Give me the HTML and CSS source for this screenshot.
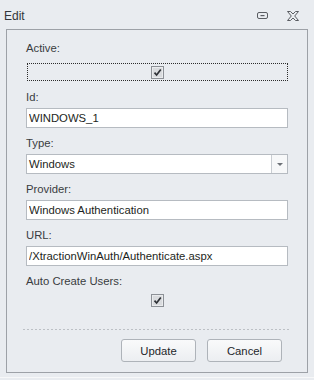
FILE: index.html
```html
<!DOCTYPE html>
<html lang="en">
<head>
    <meta charset="UTF-8">
    <meta name="viewport" content="width=device-width, initial-scale=1.0">
    <title>Edit</title>
    <link rel="stylesheet" href="styles.css">
</head>
<body>
    <div class="window">
        <div class="titlebar">
            <span class="title">Edit</span>
            <div class="title-buttons">
                <span class="tb-btn restore">
                    <svg width="12" height="8" viewBox="0 0 12 8">
                        <rect x="0.5" y="0.5" width="10" height="6" rx="1.5" fill="none" stroke="#5a5d62"/>
                        <rect x="3.5" y="3" width="4" height="1.2" fill="#5a5d62"/>
                    </svg>
                </span>
                <span class="tb-btn close">
                    <svg width="12" height="10" viewBox="0 0 12 10">
                        <path d="M0.5 0.5 H3.5 L6 3 L8.5 0.5 H11.5 L7.7 5 L11.5 9.5 H8.5 L6 7 L3.5 9.5 H0.5 L4.3 5 Z" fill="none" stroke="#5a5d62" stroke-linejoin="round"/>
                    </svg>
                </span>
            </div>
        </div>
        <div class="panel">
            <label class="field-label">Active:</label>
            <div class="check-row focused">
                <span class="checkbox">
                    <svg width="13" height="13" viewBox="0 0 13 13">
                        <rect x="0.5" y="0.5" width="12" height="12" fill="#eceef0" stroke="#8d9197"/>
                        <rect x="1.5" y="1.5" width="10" height="10" fill="#d9dbde" stroke="#e9ebed"/>
                        <path d="M3.5 6.6 L5.6 9 L9.8 3.4" fill="none" stroke="#2e3136" stroke-width="1.7"/>
                    </svg>
                </span>
            </div>

            <div class="field">
                <label class="field-label" for="id">Id:</label>
                <input class="text-input" type="text" id="id" value="WINDOWS_1">
            </div>
            <div class="field">
                <label class="field-label">Type:</label>
                <div class="combo">
                    <span class="combo-value">Windows</span>
                    <span class="combo-btn"><span class="arrow"></span></span>
                </div>
            </div>
            <div class="field">
                <label class="field-label" for="provider">Provider:</label>
                <input class="text-input" type="text" id="provider" value="Windows Authentication">
            </div>
            <div class="field">
                <label class="field-label" for="url">URL:</label>
                <input class="text-input" type="text" id="url" value="/XtractionWinAuth/Authenticate.aspx">
            </div>
            <label class="field-label">Auto Create Users:</label>
            <div class="check-row auto">
                <span class="checkbox">
                    <svg width="13" height="13" viewBox="0 0 13 13">
                        <rect x="0.5" y="0.5" width="12" height="12" fill="#eceef0" stroke="#8d9197"/>
                        <rect x="1.5" y="1.5" width="10" height="10" fill="#d9dbde" stroke="#e9ebed"/>
                        <path d="M3.5 6.6 L5.6 9 L9.8 3.4" fill="none" stroke="#2e3136" stroke-width="1.7"/>
                    </svg>
                </span>
            </div>

            <div class="separator"></div>
            <div class="button-row">
                <button class="button">Update</button>
                <button class="button">Cancel</button>
            </div>
        </div>
    </div>
</body>
</html>
```
FILE: styles.css
```css
body {
    margin: 0;
    background: #e9ecf0;
    font-family: 'Liberation Sans', Arial, sans-serif;
    font-size: 11.3px;
    color: #33363a;
}
.window {
    width: 314px;
    height: 377px;
    border-bottom: 1px solid #f7f8f9;
    box-shadow: 0 2px 0 #3f4145;
}
.titlebar {
    height: 29px;
    display: flex;
    align-items: center;
    justify-content: space-between;
    padding: 0 15px 0 4px;
}
.title {
    font-size: 12px;
    color: #33363a;
    margin-top: 2px;
}
.title-buttons {
    display: flex;
    align-items: center;
    gap: 18px;
    margin-top: 2px;
}
.tb-btn svg {
    display: block;
}
.panel {
    margin: 0 6px;
    border: 1px solid #9da1a7;
    padding: 11px 19px 10px 19px;
    display: flex;
    flex-direction: column;
}
.field-label {
    display: block;
    line-height: 15px;
    height: 15px;
    color: #393c41;
}
.check-row {
    display: flex;
    justify-content: center;
    align-items: center;
}
.checkbox svg {
    display: block;
}
.check-row.focused {
    margin: 7px 0 9px 1px;
    height: 16px;
    border: 1px dotted #2c2c2c;
}
.check-row.auto {
    margin-top: 5px;
    height: 13px;
}
.field {
    display: flex;
    flex-direction: column;
    gap: 3px;
    margin-bottom: 8px;
}
.text-input {
    height: 20px;
    box-sizing: border-box;
    border: 1px solid #b6bbc1;
    background: #fff;
    padding: 0 2px;
    margin: 0;
    font-family: inherit;
    font-size: 11.3px;
    color: #1d1f22;
    outline: none;
}
.combo {
    height: 20px;
    box-sizing: border-box;
    border: 1px solid #b6bbc1;
    background: #fff;
    display: flex;
    align-items: center;
}
.combo-value {
    flex: 1;
    padding-left: 2px;
    color: #1d1f22;
}
.combo-btn {
    width: 15px;
    height: 100%;
    border-left: 1px solid #c9cdd2;
    background: #f7f8f9;
    display: flex;
    align-items: center;
    justify-content: center;
}
.arrow {
    width: 0;
    height: 0;
    border-left: 3.5px solid transparent;
    border-right: 3.5px solid transparent;
    border-top: 3.5px solid #6d7177;
    margin-top: 1px;
}
.separator {
    height: 1px;
    margin: 22px -2px 0 -3px;
    background: repeating-linear-gradient(to right, #bcc0c5 0 2px, transparent 2px 4px);
}
.button-row {
    display: flex;
    justify-content: flex-end;
    gap: 11px;
    margin: 9px 6px 0 0;
}
.button {
    width: 75px;
    height: 23px;
    padding: 0;
    border: 1px solid #aeb3b9;
    border-radius: 3px;
    background: linear-gradient(#f9fafb 0%, #eceef1 100%);
    font-family: inherit;
    font-size: 11.3px;
    color: #24262a;
}
```
